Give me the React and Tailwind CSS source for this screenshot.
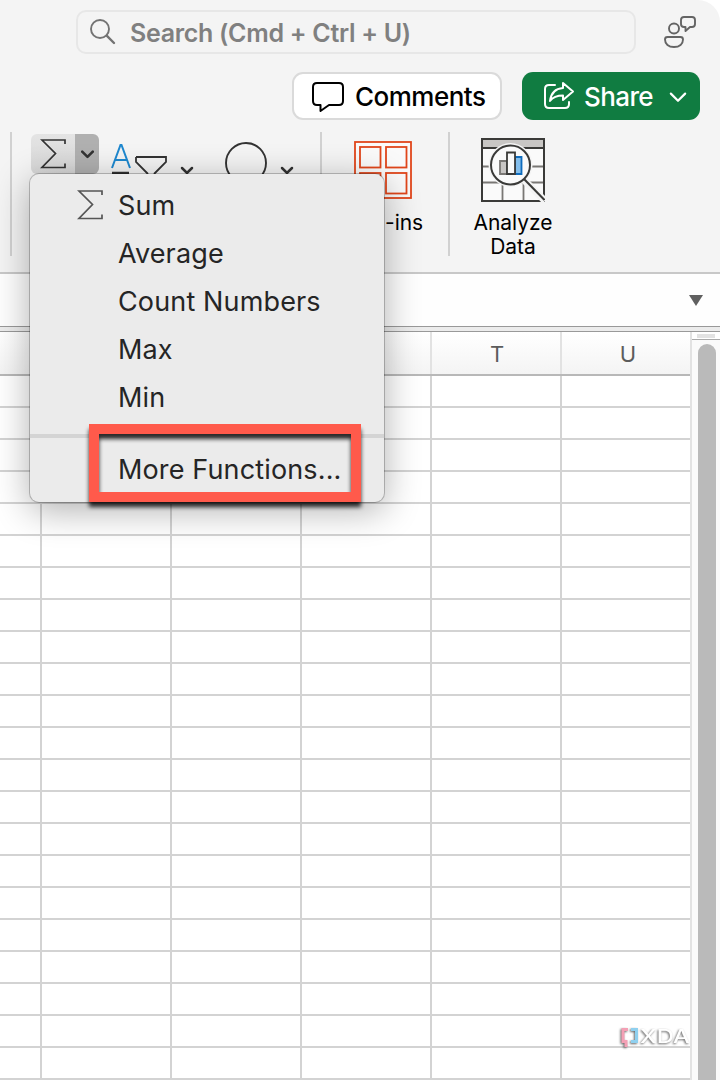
const columns = ['Q', 'R', 'S', 'T', 'U'];
const rows = Array.from({ length: 23 }, (_, i) => i);
const menuItems = ['Sum', 'Average', 'Count Numbers', 'Max', 'Min'];

function Sigma({ className }) {
  return (
    <svg className={className} viewBox="0 0 26 30" fill="none" stroke="currentColor" strokeWidth="1.7">
      <path d="M25 5V1H2L15.5 14.5L2 28.5H25V24.5" />
    </svg>
  );
}

function Chevron({ className }) {
  return (
    <svg className={className} viewBox="0 0 16 10" fill="none" stroke="currentColor" strokeLinecap="round" strokeLinejoin="round">
      <path d="M1.5 1.5L8 8L14.5 1.5" />
    </svg>
  );
}

function TitleBar() {
  return (
    <div className="flex h-[54px] pt-[10px] pl-[76px]">
      <div className="flex h-11 w-[560px] items-center rounded-[10px] border-2 border-[#e7e7e7] pl-3">
        <svg className="h-[26px] w-[26px] shrink-0 text-[#737373]" viewBox="0 0 26 26" fill="none" stroke="currentColor" strokeLinecap="round">
          <circle cx="10" cy="10" r="9" strokeWidth="1.9" />
          <path d="M16.7 16.7L24 24" strokeWidth="2.4" />
        </svg>
        <span className="ml-[14px] pt-[3px] text-[25px] font-semibold tracking-[-0.3px] whitespace-nowrap text-[#808080]">
          Search (Cmd + Ctrl + U)
        </span>
      </div>
      <svg className="mt-[5px] ml-7 h-[34px] w-[34px] text-[#646464]" viewBox="0 0 34 34" fill="none" stroke="currentColor" strokeWidth="1.9" strokeLinejoin="round">
        <circle cx="10" cy="13.5" r="5" />
        <path d="M3.5 22H16.5Q19 22 19 24.5C19 29 15.5 32 10 32S1 29 1 24.5Q1 22 3.5 22Z" />
        <path d="M20 2H28Q31 2 31 5V9Q31 12 28 12H26L21.5 16V12H20Q17 12 17 9V5Q17 2 20 2Z" />
      </svg>
    </div>
  );
}

function ActionButtons() {
  return (
    <div className="mt-[18px] flex h-12 justify-end gap-5 pr-5">
      <button className="flex w-[210px] items-center rounded-[11px] border-2 border-[#dadada] bg-white pl-[17px] text-black">
        <svg className="h-8 w-[34px] shrink-0" viewBox="0 0 34 32" fill="none" stroke="currentColor" strokeWidth="2" strokeLinejoin="round">
          <path d="M6 3H28Q32 3 32 7V21Q32 25 28 25H18L9.5 31V25H6Q2 25 2 21V7Q2 3 6 3Z" />
        </svg>
        <span className="ml-[10px] pt-px text-[26px] font-medium tracking-[-0.5px]">Comments</span>
      </button>
      <button className="flex w-[178px] items-center rounded-[11px] bg-[#107c41] pl-[21px] text-white">
        <svg className="h-[30px] w-8 shrink-0" viewBox="0 0 32 30" fill="none" stroke="currentColor" strokeWidth="2" strokeLinejoin="round" strokeLinecap="round">
          <path d="M12 4H6Q2 4 2 8V23Q2 27 6 27H22Q26 27 26 23V21" />
          <path d="M20 2L30 10.5L20 19V14.5C14 14.5 10 16 7 20C8 12 13 7.5 20 7Z" />
        </svg>
        <span className="ml-[9px] pt-px text-[26px] font-medium tracking-[-0.6px]">Share</span>
        <Chevron className="mt-[2px] ml-4 h-[11px] w-[18px] stroke-2" />
      </button>
    </div>
  );
}

function Ribbon() {
  return (
    <div className="mt-3 flex h-[124px]">
      <div className="ml-[10px] w-[2px] bg-[#d1d1d1]" />
      <div className="mt-[2px] ml-[19px] flex h-10 w-[68px] overflow-hidden rounded-[6px]">
        <div className="w-11 bg-linear-to-b from-[#e4e4e4] to-[#d6d6d6] pt-[5px] pl-[9px] text-[#333]">
          <Sigma className="h-[30px] w-[26px]" />
        </div>
        <div className="flex flex-1 items-center justify-center bg-[#b0b0b0] text-[#333]">
          <Chevron className="h-[9px] w-[13px] stroke-[3.2]" />
        </div>
      </div>
      <svg className="mt-[9px] ml-3 h-[38px] w-[86px] text-[#333]" viewBox="0 0 86 38" fill="none" stroke="currentColor">
        <path d="M1 27L9.5 4H10.5L19 27M4 19H16" stroke="#1e88cf" strokeWidth="2" />
        <path d="M1 32H18" strokeWidth="2.5" />
        <path d="M25 16H55V21L43 33M25 16V21L37 33" strokeWidth="1.8" />
        <path d="M71 27L76 32L81 27" strokeWidth="2.5" strokeLinecap="round" />
      </svg>
      <svg className="mt-[9px] ml-[26px] h-[38px] w-[72px] text-[#333]" viewBox="0 0 72 38" fill="none" stroke="currentColor">
        <circle cx="23" cy="22" r="20" strokeWidth="1.9" />
        <path d="M59 27L64 32L69 27" strokeWidth="2.5" strokeLinecap="round" />
      </svg>
      <div className="ml-[25px] w-[2px] bg-[#d1d1d1]" />
      <div className="flex w-[126px] flex-col items-center">
        <svg className="mt-[9px] mr-1 h-[58px] w-[58px] shrink-0" viewBox="0 0 58 58" fill="#fafafa" stroke="#e0461b" strokeWidth="1.8">
          <rect x="1" y="1" width="56" height="56" />
          <rect x="6" y="6" width="20.5" height="20.5" />
          <rect x="32" y="6" width="20.5" height="20.5" />
          <rect x="6" y="32" width="20.5" height="20.5" />
          <rect x="32" y="32" width="20.5" height="20.5" />
        </svg>
        <span className="mt-3 mr-[2px] text-[21px] leading-6 whitespace-nowrap text-black">Add-ins</span>
      </div>
      <div className="w-[2px] bg-[#d1d1d1]" />
      <div className="flex w-[126px] flex-col items-center">
        <svg className="mt-[6px] h-16 w-16 shrink-0" viewBox="0 0 64 64" fill="none">
          <path d="M1 1H63V63H1Z" fill="#fafafa" />
          <path d="M1 1H63V10H1Z" fill="#c8c6c4" />
          <path d="M1 28.5H63M1 44.5H63M21.5 44V63M42.5 44V63" stroke="#797774" strokeWidth="1.8" />
          <path d="M1 10H63M1 1H63V63H1Z" stroke="#3a3a38" strokeWidth="2" />
          <circle cx="29.5" cy="27" r="22" fill="#f4f4f4" />
          <path d="M42 41L64 63" stroke="#f4f4f4" strokeWidth="7" />
          <circle cx="29.5" cy="27" r="19.5" fill="#fafafa" stroke="#3a3a38" strokeWidth="2" />
          <path d="M43 41L63.5 62" stroke="#3a3a38" strokeWidth="2" />
          <path d="M19 23H26V36H19Z" fill="#c8c6c4" stroke="#797774" strokeWidth="1.8" />
          <path d="M34 19H40.5V36H34Z" fill="#83beec" stroke="#0f6cbd" strokeWidth="1.8" />
          <path d="M26 14.5H34V36H26Z" fill="#fafafa" stroke="#3a3a38" strokeWidth="1.8" />
        </svg>
        <span className="mt-[9px] text-center text-[21px] leading-6 text-black">
          Analyze<br />Data
        </span>
      </div>
    </div>
  );
}

function Grid() {
  return (
    <div className="w-[692px] shrink-0 border-r-2 border-[#e2e2e2]">
      <div className="flex h-11 border-b-2 border-[#b8b8b8] bg-linear-to-b from-white to-[#f4f4f4]">
        <div className="w-[42px] shrink-0 border-r-2 border-[#dcdcdc]" />
        {columns.map((col) => (
          <div
            key={col}
            className="flex w-[130px] shrink-0 items-center justify-center border-r-2 border-[#e2e2e2] pt-[3px] pl-[2px] text-[22px] text-[#5c5c5c] last:w-[128px] last:border-r-0 last:pl-1"
          >
            {col}
          </div>
        ))}
      </div>
      {rows.map((row) => (
        <div key={row} className="flex h-8 border-b-2 border-[#d3d3d3]">
          <div className="w-[42px] shrink-0 border-r-2 border-[#d3d3d3]" />
          {columns.map((col) => (
            <div key={col} className="w-[130px] shrink-0 border-r-2 border-[#d3d3d3] last:w-[128px] last:border-r-0" />
          ))}
        </div>
      ))}
    </div>
  );
}

function AutoSumMenu() {
  return (
    <div className="absolute top-[174px] left-[30px] h-[328px] w-[354px] rounded-[9px] bg-[#ebebeb] pt-2 text-[27px] tracking-[0.14px] text-[#252525] shadow-[0_0_0_1px_rgba(0,0,0,0.22),0_8px_36px_rgba(0,0,0,0.32)]">
      {menuItems.map((item) => (
        <div key={item} className="flex h-12 items-center">
          <div className="w-[88px] pl-[47px]">
            {item === 'Sum' && <Sigma className="-mt-[2px] h-[30px] w-[26px] text-[#555]" />}
          </div>
          {item}
        </div>
      ))}
      <div className="mt-3 h-1 bg-[#d4d4d4]" />
      <div className="mt-2 flex h-12 items-center pl-[88px]">More Functions...</div>
    </div>
  );
}

function Watermark() {
  return (
    <div className="absolute top-[1025px] left-[619px] flex h-6 items-center drop-shadow-[-1px_1px_1px_rgba(0,0,0,0.6)]">
      <svg className="h-6 w-[20px]" viewBox="0 0 20 24" fill="none" strokeWidth="3">
        <path d="M9 4.5H4V16.5H7V22" stroke="#f4a0b5" />
        <path d="M12 4.5H17.5V16.5H12" stroke="#8fd0ef" />
      </svg>
      <span className="ml-px origin-left scale-x-125 text-[19px] leading-6 font-medium text-white">XDA</span>
    </div>
  );
}

export default function App() {
  return (
    <div className="relative h-[1080px] w-[720px] overflow-hidden bg-white font-['Inter','Liberation_Sans',sans-serif]">
      <div className="h-[274px] rounded-tr-[22px] border-b-2 border-[#c8c8c8] bg-[#f4f4f4]">
        <TitleBar />
        <ActionButtons />
        <Ribbon />
      </div>
      <div className="flex h-[52px] items-center justify-end bg-[#fefefe] pr-[17px]">
        <svg className="h-[11px] w-[14px]" viewBox="0 0 14 11">
          <path d="M0 0H14L7 11Z" fill="#606060" />
        </svg>
      </div>
      <div className="h-[6px] border-y border-[#999] bg-[#ececec]" />
      <div className="flex h-[748px]">
        <Grid />
        <div className="flex-1 bg-[#fafafa]">
          <div className="flex h-2 items-center justify-center border-b border-[#aaa] bg-white">
            <div className="h-1 w-[18px] bg-[#e2e2e2]" />
          </div>
          <div className="mt-1 ml-[6px] h-[740px] w-[18px] rounded-t-full bg-[#bababa]" />
        </div>
      </div>
      <AutoSumMenu />
      <div className="absolute top-[424px] left-[89px] h-[78px] w-[272px] border-10 border-[#ff5a4b] drop-shadow-[0_5px_2px_rgba(0,0,0,0.8)]" />
      <Watermark />
    </div>
  );
}
